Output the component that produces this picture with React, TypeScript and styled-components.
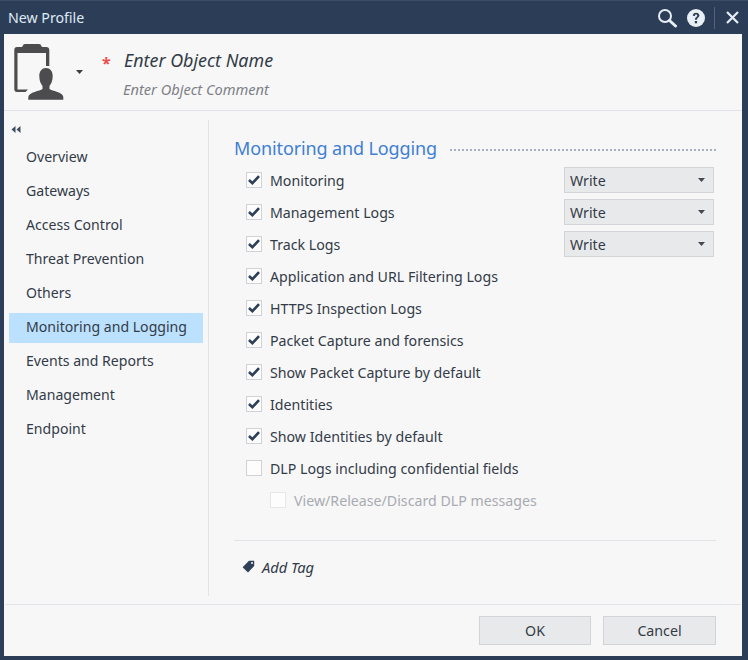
import React from "react";
import styled, { createGlobalStyle } from "styled-components";

const Global = createGlobalStyle`
  html, body { margin: 0; padding: 0; background: #2c3e57; }
  * { box-sizing: border-box; }
`;
const FONT = `"Noto Sans", "Open Sans", "Liberation Sans", sans-serif`;

const Frame = styled.div`
  width: 748px; height: 660px; display: flex; flex-direction: column;
  background: #2c3e57; padding: 0 6px 4px 4px; font-family: ${FONT}; color: #333b47;
`;
const TitleBar = styled.div`
  height: 34px; flex: none; display: flex; align-items: center; margin: 0 -6px 0 -4px; padding: 0 9px 0 8px;
  border-top: 1px solid #3b4d66;
`;
const Title = styled.div`font-size: 14.2px; color: #dfe9f3; flex: 1; margin-top: -1px;`;
const TitleIcons = styled.div`display: flex; align-items: center;`;
const HelpIcon = styled.svg`width: 18px; height: 18px; margin-left: 10px;`;
const IconSep = styled.div`width: 1px; height: 22px; background: #52647c; margin: 0 11px 0 9px;`;
const Dialog = styled.div`flex: 1; background: #f7f7f8; display: flex; flex-direction: column; min-height: 0;`;
const Header = styled.div`
  height: 77px; flex: none; display: flex; align-items: flex-start; border-bottom: 1px solid #e2e3e8; padding: 9px 0 0 10px;
`;
const ProfileIcon = styled.svg`width: 50px; height: 57px; flex: none;`;
const Caret = styled.svg`width: 7px; height: 4px; flex: none; margin: 27px 0 0 12px;`;
const Required = styled.span`color: #ef4b4b; font-size: 16px; line-height: 16px; margin: 12px 0 0 19px; width: 22px; flex: none; font-weight: 700;`;
const NameBlock = styled.div`display: flex; flex-direction: column;`;
const NameText = styled.div`font-size: 17.9px; line-height: 24px; margin-top: 5px; font-style: italic; color: #333b47;`;
const CommentText = styled.div`font-size: 14.6px; line-height: 20px; margin-top: 7px; margin-left: -1px; font-style: italic; color: #7d8087;`;
const Body = styled.div`flex: 1; display: flex; min-height: 0; padding-top: 9px;`;
const Sidebar = styled.nav`
  width: 205px; flex: none; margin-bottom: 8px; border-right: 1px solid #e2e3e8; padding: 0 0 0 5px; 
`;
const Collapse = styled.svg`display: block; width: 10px; height: 7px; margin: 6px 0 0 2px;`;
const NavList = styled.div`display: flex; flex-direction: column; gap: 4px; margin-top: 10px; width: 194px;`;
const NavItem = styled.div<{ $active?: boolean }>`
  height: 30px; line-height: 28px; padding-left: 17px; font-size: 14.1px;
  color: #333b47; background: ${(p) => (p.$active ? "#bbe1fe" : "transparent")};
`;
const Main = styled.main`flex: 1; display: flex; flex-direction: column; padding: 13px 26px 0 25px; min-width: 0;`;
const SectionHead = styled.div`display: flex; align-items: center; height: 30px; flex: none;`;
const SectionTitle = styled.h2`margin: 0; font-weight: 400; font-size: 18px; letter-spacing: -0.12px; color: #3f7fd4; white-space: nowrap;`;
const Dots = styled.div`flex: 1; margin: 3px 0 0 13px; border-top: 2px dotted #a9b2c2;`;
const Options = styled.div`display: flex; flex-direction: column; height: 352px; margin-top: 1px; flex: none;`;
const Row = styled.div<{ $sub?: boolean }>`
  height: 32px; flex: none; display: flex; align-items: center; padding-left: ${(p) => (p.$sub ? "36px" : "12px")};
`;
const Box = styled.span<{ $disabled?: boolean }>`
  width: 16px; height: 16px; flex: none; display: flex; align-items: center; justify-content: center;
  border: 1px solid ${(p) => (p.$disabled ? "#e6e7ea" : "#d0d2d7")}; background: #fdfdfd;
`;
const Label = styled.span<{ $disabled?: boolean }>`
  margin: 2px 0 0 8px; flex: 1; font-size: 14.2px; line-height: 18px; color: ${(p) => (p.$disabled ? "#a9abb0" : "#333b47")};
`;
const Select = styled.div`
  width: 150px; height: 26px; flex: none; margin-right: 2px; display: flex; align-items: center; justify-content: space-between;
  background: #e8e9eb; border: 1px solid #d2d4d8; padding: 0 8px 0 5px; font-size: 14.2px; color: #333b47;
`;
const SelectValue = styled.span`margin-top: 1px;`;
const SelectCaret = styled.svg`width: 7px; height: 4px; flex: none;`;
const TagBar = styled.div`
  border-top: 1px solid #e2e3e8; height: 52px; margin-top: 24px; flex: none; display: flex; align-items: center; padding: 0 0 0 8px;
`;
const TagIcon = styled.svg`width: 13px; height: 13px; flex: none;`;
const TagText = styled.span`font-style: italic; font-size: 14.7px; margin-left: 7px; color: #333b47;`;
const Footer = styled.div`
  height: 52px; flex: none; border-top: 1px solid #e2e3e8; margin-left: 1px; margin-right: 1px; display: flex; justify-content: flex-end;
  align-items: flex-start; gap: 12px; padding: 11px 25px 0 0;
`;
const Button = styled.button<{ $w: number }>`
  width: ${(p) => p.$w}px; height: 29px; background: #e8e9eb; border: 1px solid #d2d4d8; font-family: ${FONT};
  font-size: 14.2px; color: #333b47; padding: 0;
`;

const Check = () => (
  <svg width="12" height="10" viewBox="0 0 12 10">
    <path d="M1 5 L4.4 8.2 L11 1.2" fill="none" stroke="#2f3f57" strokeWidth="2.6" />
  </svg>
);

const options: { label: string; checked: boolean; select?: boolean; sub?: boolean }[] = [
  { label: "Monitoring", checked: true, select: true },
  { label: "Management Logs", checked: true, select: true },
  { label: "Track Logs", checked: true, select: true },
  { label: "Application and URL Filtering Logs", checked: true },
  { label: "HTTPS Inspection Logs", checked: true },
  { label: "Packet Capture and forensics", checked: true },
  { label: "Show Packet Capture by default", checked: true },
  { label: "Identities", checked: true },
  { label: "Show Identities by default", checked: true },
  { label: "DLP Logs including confidential fields", checked: false },
  { label: "View/Release/Discard DLP messages", checked: false, sub: true },
];
const nav = ["Overview", "Gateways", "Access Control", "Threat Prevention", "Others", "Monitoring and Logging", "Events and Reports", "Management", "Endpoint"];

export default function App() {
  return (
    <Frame>
      <Global />
      <TitleBar>
        <Title>New Profile</Title>
        <TitleIcons>
          <svg width="20" height="20" viewBox="0 0 20 20">
            <circle cx="8" cy="8" r="6" fill="none" stroke="#e6edf4" strokeWidth="2" />
            <path d="M12.5 12.5 L18.5 18" stroke="#e6edf4" strokeWidth="3" strokeLinecap="round" />
          </svg>
          <HelpIcon viewBox="0 0 18 18">
            <circle cx="9" cy="9" r="9" fill="#e9eff5" />
            <path d="M5.8 6.8 C5.8 4.8 7.3 3.7 9.1 3.7 C11 3.7 12.4 4.9 12.4 6.6 C12.4 8.6 9.9 8.8 9.9 10.8 L7.9 10.8 C7.9 8 10.2 8 10.2 6.7 C10.2 6 9.8 5.6 9.1 5.6 C8.4 5.6 8 6.1 8 6.9 Z" fill="#2c3e57" />
            <rect x="7.8" y="12" width="2.3" height="2.3" fill="#2c3e57" />
          </HelpIcon>
          <IconSep />
          <svg width="13" height="13" viewBox="0 0 13 13">
            <path d="M1 1 L12 12 M12 1 L1 12" stroke="#e6edf4" strokeWidth="2.2" />
          </svg>
        </TitleIcons>
      </TitleBar>
      <Dialog>
        <Header>
          <ProfileIcon viewBox="0 0 50 57">
            <path d="M3 4 H8 L9.5 1.5 Q10 1 11 1 H25 Q26 1 26.5 1.5 L28 4 H32 Q35.3 4 35.3 7 V23 H32 V10 H3.5 V46.5 H14 L11.5 49 H3 Q0.3 49 0.3 46 V7 Q0.3 4 3 4 Z" fill="#4c4c4e" />
            <path d="M32 25 C36 25 38.7 28 38.7 33 C38.7 38 37 41 35.5 43 V46 C38 48 49 49 49.3 54 V56.7 H14.3 V54 C15 49 26 48 28.5 46 V43 C27 41 25.3 38 25.3 33 C25.3 28 28 25 32 25 Z" fill="#4c4c4e" />
          </ProfileIcon>
          <Caret viewBox="0 0 7 4"><path d="M0 0 H7 L3.5 4 Z" fill="#3a3d42" /></Caret>
          <Required>*</Required>
          <NameBlock>
            <NameText>Enter Object Name</NameText>
            <CommentText>Enter Object Comment</CommentText>
          </NameBlock>
        </Header>
        <Body>
          <Sidebar>
            <Collapse viewBox="0 0 10 7">
              <path d="M4.5 0 V7 L0.5 3.5 Z M9.5 0 V7 L5.5 3.5 Z" fill="#3f4d62" />
            </Collapse>
            <NavList>
              {nav.map((n) => (
                <NavItem key={n} $active={n === "Monitoring and Logging"}>{n}</NavItem>
              ))}
            </NavList>
          </Sidebar>
          <Main>
            <SectionHead>
              <SectionTitle>Monitoring and Logging</SectionTitle>
              <Dots />
            </SectionHead>
            <Options>
              {options.map((o) => (
                <Row key={o.label} $sub={o.sub}>
                  <Box $disabled={o.sub}>{o.checked && <Check />}</Box>
                  <Label $disabled={o.sub}>{o.label}</Label>
                  {o.select && (
                    <Select>
                      <SelectValue>Write</SelectValue>
                      <SelectCaret viewBox="0 0 7 4"><path d="M0 0 H7 L3.5 4 Z" fill="#44484f" /></SelectCaret>
                    </Select>
                  )}
                </Row>
              ))}
            </Options>
            <TagBar>
              <TagIcon viewBox="0 0 13 13">
                <path d="M7 0.8 H12.2 V6 L6 12.4 L0.6 7.2 Z" fill="#2f4058" />
                <circle cx="10" cy="3" r="1" fill="#f7f7f8" />
              </TagIcon>
              <TagText>Add Tag</TagText>
            </TagBar>
          </Main>
        </Body>
        <Footer>
          <Button $w={112}>OK</Button>
          <Button $w={113}>Cancel</Button>
        </Footer>
      </Dialog>
    </Frame>
  );
}
